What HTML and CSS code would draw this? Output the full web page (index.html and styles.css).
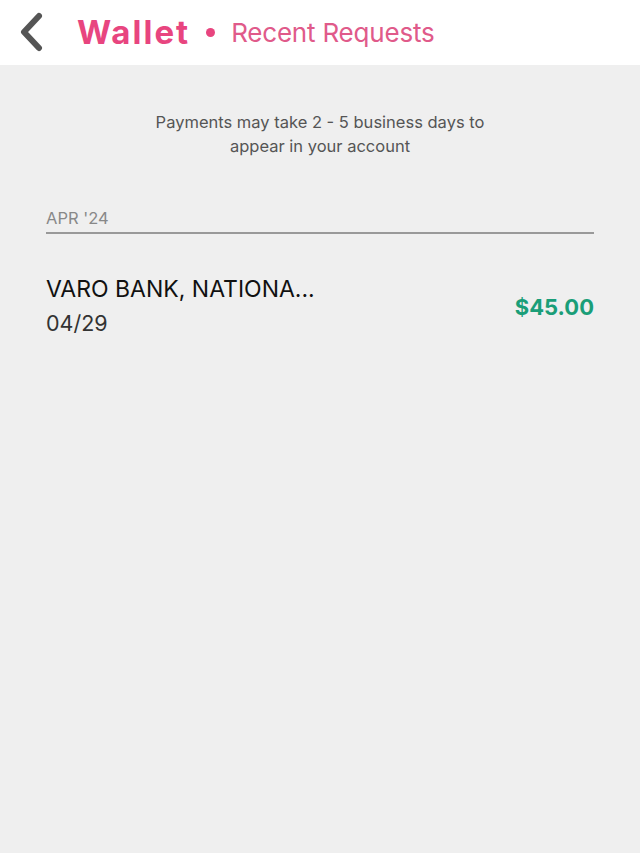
FILE: index.html
```html
<!DOCTYPE html>
<html lang="en">

<head>
  <meta charset="UTF-8">
  <meta name="viewport" content="width=device-width, initial-scale=1.0">
  <title>Recent Requests</title>
  <link rel="stylesheet" href="styles.css">
</head>

<body>
  <header class="topbar">
    <a class="back" href="javascript:;">
      <svg width="26" height="40" viewBox="0 0 26 40">
        <path d="M21 4 L6 20 L21 36" fill="none" stroke="#555" stroke-width="6" stroke-linecap="round" stroke-linejoin="round" />
      </svg>
    </a>
    <h1 class="title">Wallet</h1>
    <span class="dot"></span>
    <span class="subtitle">Recent Requests</span>
  </header>

  <main class="content">
    <p class="notice">Payments may take 2 - 5 business days to<br>appear in your account</p>

    <div class="month">APR '24</div>

    <ul class="requests">
      <li class="request">
        <div class="info">
          <span class="name">VARO BANK, NATIONA...</span>
          <span class="date">04/29</span>
        </div>
        <span class="amount">$45.00</span>
      </li>
    </ul>
  </main>
</body>

</html>
```

FILE: styles.css
```css
* {
  padding: 0;
  margin: 0;
  box-sizing: border-box;
}

body {
  width: 640px;
  min-height: 853px;
  background-color: #efefef;
  font-family: "Inter", "Noto Sans", sans-serif;
}

.topbar {
  height: 65px;
  background-color: #fff;
  display: flex;
  align-items: center;
  padding-left: 18px;
}

.back {
  display: flex;
  width: 26px;
  height: 40px;
  margin-top: -2px;
}

.title {
  margin-left: 33px;
  font-size: 33px;
  font-weight: 700;
  color: #e8457f;
  letter-spacing: 2px;
  margin-top: -1px;
}

.dot {
  width: 9px;
  height: 9px;
  border-radius: 50%;
  background-color: #e8457f;
  margin-left: 16px;
}

.subtitle {
  margin-left: 16px;
  font-size: 26px;
  color: #e05a8a;
  letter-spacing: -0.2px;
  margin-top: -1px;
}

.content {
  padding: 45px 46px 0;
}

.notice {
  text-align: center;
  font-size: 16.5px;
  line-height: 24px;
  color: #555;
}

.month {
  margin-top: 50px;
  padding-bottom: 4px;
  border-bottom: 2px solid #999;
  font-size: 16.5px;
  color: #888;
}

.requests {
  list-style-type: none;
}

.request {
  display: flex;
  justify-content: space-between;
  align-items: center;
  padding-top: 40px;
}

.info {
  display: flex;
  flex-direction: column;
}

.name {
  font-size: 23px;
  color: #111;
  line-height: 30px;
}

.date {
  font-size: 21.5px;
  color: #333;
  line-height: 30px;
  margin-top: 4px;
}

.amount {
  font-size: 22px;
  font-weight: 700;
  color: #1a9e78;
  margin-top: 2px;
}
```
